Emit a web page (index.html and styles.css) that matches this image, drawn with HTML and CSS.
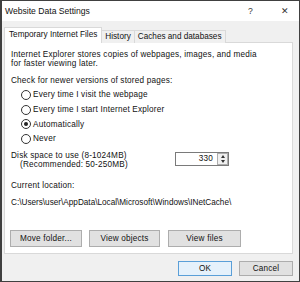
FILE: index.html
```html
<!DOCTYPE html>
<html>
<head>
  <meta charset="utf-8">
  <title>Website Data Settings</title>
  <link rel="stylesheet" href="styles.css">
</head>
<body>
  <div class="window">
    <div class="titlebar">
      <span class="title">Website Data Settings</span>
      <span class="help">?</span>
      <span class="close">&#x2715;</span>
    </div>
    <div class="body">
      <div class="tabs">
        <div class="tab active">Temporary Internet Files</div>
        <div class="tab">History</div>
        <div class="tab">Caches and databases</div>
      </div>
      <div class="panel">
        <p class="intro">Internet Explorer stores copies of webpages, images, and media<br>for faster viewing later.</p>
        <div class="label check">Check for newer versions of stored pages:</div>
        <div class="radios">
          <div class="radio"><span class="dot"></span>Every time I visit the webpage</div>
          <div class="radio"><span class="dot"></span>Every time I start Internet Explorer</div>
          <div class="radio"><span class="dot on"></span>Automatically</div>
          <div class="radio"><span class="dot"></span>Never</div>
        </div>
        <div class="disk">
          <div class="disk-text">
            Disk space to use (8-1024MB)<br>
            <span class="rec">(Recommended: 50-250MB)</span>
          </div>
          <div class="spin">
            <span class="spin-value">330</span>
            <span class="spin-arrows">
              <span class="arrow-up"></span>
              <span class="arrow-down"></span>
            </span>
          </div>
        </div>
        <div class="label location">Current location:</div>
        <div class="label path">C:\Users\user\AppData\Local\Microsoft\Windows\INetCache\</div>
        <div class="actions">
          <button class="btn w72">Move folder...</button>
          <button class="btn w71">View objects</button>
          <button class="btn w73">View files</button>
        </div>
      </div>
      <div class="footer">
        <button class="btn ok">OK</button>
        <button class="btn">Cancel</button>
      </div>
    </div>
  </div>
</body>
</html>
```

FILE: styles.css
```css
html, body {
  margin: 0;
  padding: 0;
}

body {
  width: 300px;
  height: 282px;
  font-family: "Liberation Sans", Arial, sans-serif;
  font-size: 8.2px;
  letter-spacing: 0.2px;
  color: #111;
  overflow: hidden;
}

.window {
  box-sizing: border-box;
  width: 300px;
  height: 282px;
  border: 1px solid #404040;
  border-left-width: 2px;
  background: #f0f0f0;
  display: flex;
  flex-direction: column;
}

.titlebar {
  height: 20px;
  background: #fff;
  display: flex;
  align-items: center;
  padding-left: 3px;
  font-size: 8.6px;
  letter-spacing: 0;
}

.title {
  flex: 1;
}

.help {
  width: 10px;
  margin-right: 23px;
  color: #333;
}

.close {
  width: 18px;
  font-size: 9px;
  color: #333;
}

.body {
  flex: 1;
  padding: 6px 6px 0 2px;
}

.tabs {
  display: flex;
  align-items: flex-end;
  height: 16px;
  margin-bottom: -1px;
  position: relative;
}

.tab {
  height: 13px;
  line-height: 12px;
  padding: 0 3px;
  white-space: nowrap;
  letter-spacing: 0;
  border: 1px solid #d9d9d9;
  border-bottom: none;
  border-left: none;
  background: #f0f0f0;
  box-sizing: border-box;
}

.tab.active {
  height: 16px;
  line-height: 14px;
  border-left: 1px solid #d9d9d9;
  background: #fff;
  padding: 0 4px;
}

.panel {
  box-sizing: border-box;
  height: 212px;
  width: 289px;
  background: #fff;
  border: 1px solid #d9d9d9;
  padding: 6.5px 0 0 6px;
}

.intro {
  margin: 0;
  line-height: 9.5px;
}

.label {
  line-height: 10px;
}

.check {
  margin-top: 7px;
}

.radios {
  margin-top: 2px;
}

.radio {
  height: 14.7px;
  display: flex;
  align-items: center;
  padding-left: 10px;
}

.dot {
  box-sizing: border-box;
  width: 10px;
  height: 10px;
  border: 1px solid #333;
  border-radius: 50%;
  margin-right: 2px;
  display: flex;
  align-items: center;
  justify-content: center;
}

.dot.on::after {
  content: "";
  width: 4px;
  height: 4px;
  border-radius: 50%;
  background: #222;
}

.disk {
  margin-top: 4.5px;
  display: flex;
  align-items: flex-start;
}

.disk-text {
  width: 164px;
  line-height: 9.6px;
}

.rec {
  padding-left: 9px;
}

.spin {
  box-sizing: border-box;
  margin-top: 1px;
  width: 54px;
  height: 14px;
  border: 1px solid #7a7a7a;
  display: flex;
  align-items: center;
}

.spin-value {
  flex: 1;
  text-align: right;
  padding-right: 4px;
}

.spin-arrows {
  box-sizing: border-box;
  width: 11px;
  height: 12px;
  border: 1px solid #adadad;
  background: #f0f0f0;
  display: flex;
  flex-direction: column;
  align-items: center;
  justify-content: space-around;
}

.arrow-up {
  border-left: 2.5px solid transparent;
  border-right: 2.5px solid transparent;
  border-bottom: 3px solid #333;
}

.arrow-down {
  border-left: 2.5px solid transparent;
  border-right: 2.5px solid transparent;
  border-top: 3px solid #333;
}

.location {
  margin-top: 11px;
}

.path {
  margin-top: 7px;
  letter-spacing: 0;
}

.actions {
  margin-top: 22px;
  display: flex;
  gap: 7px;
  margin-left: -1px;
}

.btn {
  box-sizing: border-box;
  height: 17px;
  padding: 0;
  font-family: inherit;
  font-size: 8.2px;
  letter-spacing: 0.2px;
  color: #111;
  background: #e1e1e1;
  border: 1px solid #adadad;
}

.w72 { width: 72px; }
.w71 { width: 71px; margin-right: 1px; }
.w73 { width: 73px; }

.footer {
  display: flex;
  justify-content: flex-end;
  gap: 7px;
  margin-top: 7px;
}

.footer .btn {
  width: 54px;
  height: 15px;
}

.btn.ok {
  background: #e5f1fb;
  border-color: #5a9fd8;
}
```
